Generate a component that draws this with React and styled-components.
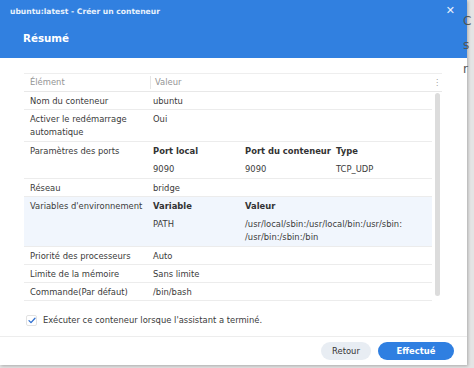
import React from "react";
import styled, { createGlobalStyle } from "styled-components";

const GlobalStyle = createGlobalStyle`
  html, body {
    margin: 0;
    padding: 0;
    background: #e4e4e4;
    font-family: "DejaVu Sans", Verdana, sans-serif;
  }
`;

const Page = styled.div`
  display: flex;
  width: 474px;
  height: 368px;
  overflow: hidden;
`;

const Dialog = styled.div`
  width: 467px;
  height: 365px;
  flex: none;
  background: #fff;
  display: flex;
  flex-direction: column;
  box-shadow: 1px 1px 3px rgba(0, 0, 0, 0.25);
`;

const Behind = styled.div`
  flex: 1;
  overflow: hidden;
  display: flex;
  flex-direction: column;
  padding-top: 14px;
  gap: 10px;
  color: #555;
  font-size: 12px;
  line-height: 14px;
  white-space: nowrap;
  margin-left: -4px;
`;

const Header = styled.div`
  height: 58px;
  background: #3180e0;
  color: #fff;
  padding: 5px 12px 0 10px;
  box-sizing: border-box;
`;

const TitleRow = styled.div`
  display: flex;
  justify-content: space-between;
  align-items: center;
  height: 12px;
  font-size: 7.6px;
  font-weight: bold;
  color: #e8f1fc;
`;

const Close = styled.span`
  font-size: 11px;
  font-weight: bold;
  line-height: 12px;
`;

const Heading = styled.div`
  margin: 14px 0 0 13px;
  font-size: 10.3px;
  font-weight: bold;
  line-height: 14px;
`;

const Body = styled.div`
  flex: 1;
  padding: 15px 25px 0 24px;
  display: flex;
  flex-direction: column;
  color: #3a3a3a;
  font-size: 8.4px;
`;

const Table = styled.div`
  display: flex;
  flex-direction: column;
`;

const HeadRow = styled.div`
  display: grid;
  grid-template-columns: 126px 1fr 10px;
  height: 19px;
  border-top: 1px solid #eeeeee;
  border-bottom: 1px solid #e8e8e8;
  box-sizing: border-box;
  color: #949494;
  align-items: center;
`;

const HeadCell = styled.div`
  padding-left: ${(p) => (p.first ? "6px" : "4px")};
  border-left: ${(p) => (p.first ? "none" : "1px solid #e6e6e6")};
  line-height: 13px;
`;

const Kebab = styled.div`
  color: #999;
  font-size: 8px;
  text-align: center;
  line-height: 8px;
`;

const Scroll = styled.div`
  display: grid;
  grid-template-columns: 1fr 10px;
`;

const Rows = styled.div`
  display: flex;
  flex-direction: column;
`;

const Row = styled.div`
  display: grid;
  grid-template-columns: 126px 1fr;
  min-height: ${(p) => p.h}px;
  box-sizing: border-box;
  border-bottom: 1px solid #ececec;
  background: ${(p) => (p.hl ? "#f1f6fd" : "#fff")};
  line-height: 13px;
`;

const Label = styled.div`
  padding: 3px 6px 1px;
`;

const Value = styled.div`
  padding: 3px 3px 1px;
`;

const Sub = styled.div`
  display: grid;
  grid-template-columns: ${(p) => p.cols};
  line-height: 13px;
`;

const SubCell = styled.div`
  padding: 3px 3px 2px;
  font-weight: ${(p) => (p.bold ? "bold" : "normal")};
  color: ${(p) => (p.bold ? "#333" : "#3a3a3a")};
  white-space: nowrap;
`;

const Track = styled.div`
  display: flex;
  justify-content: center;
  padding-top: 1px;
`;

const Thumb = styled.div`
  width: 5px;
  height: 203px;
  border-radius: 3px;
  background: #dcdcdc;
`;

const CheckLine = styled.label`
  display: flex;
  align-items: center;
  gap: 6px;
  margin: 13px 0 0 2px;
  line-height: 12px;
`;

const Box = styled.span`
  width: 9px;
  height: 9px;
  border: 1px solid #e2e2e2;
  border-radius: 2px;
  display: flex;
  align-items: center;
  justify-content: center;
  background: #fff;
`;

const Footer = styled.div`
  height: 29px;
  border-top: 1px solid #ededed;
  display: flex;
  justify-content: flex-end;
  align-items: flex-start;
  gap: 7px;
  padding: 5px 13px 0 0;
  box-sizing: border-box;
`;

const Button = styled.button`
  height: 18px;
  width: ${(p) => p.w}px;
  border: none;
  border-radius: 9px;
  font-family: "DejaVu Sans", Verdana, sans-serif;
  font-size: 8.4px;
  font-weight: ${(p) => (p.primary ? "bold" : "normal")};
  background: ${(p) => (p.primary ? "#2f7fe1" : "#e8edf3")};
  color: ${(p) => (p.primary ? "#fff" : "#333")};
  padding: 0;
`;

export default function App() {
  return (
    <>
      <GlobalStyle />
      <Page>
        <Dialog>
          <Header>
            <TitleRow>
              <span>ubuntu:latest - Créer un conteneur</span>
              <Close>✕</Close>
            </TitleRow>
            <Heading>Résumé</Heading>
          </Header>
          <Body>
            <Table>
              <HeadRow>
                <HeadCell first>Élément</HeadCell>
                <HeadCell>Valeur</HeadCell>
                <Kebab>⋮</Kebab>
              </HeadRow>
              <Scroll>
                <Rows>
                  <Row h={18}>
                    <Label>Nom du conteneur</Label>
                    <Value>ubuntu</Value>
                  </Row>
                  <Row h={32}>
                    <Label>
                      Activer le redémarrage
                      <br />
                      automatique
                    </Label>
                    <Value>Oui</Value>
                  </Row>
                  <Row h={36}>
                    <Label>Paramètres des ports</Label>
                    <Sub cols="92px 91px 1fr">
                      <SubCell bold>Port local</SubCell>
                      <SubCell bold>Port du conteneur</SubCell>
                      <SubCell bold>Type</SubCell>
                      <SubCell>9090</SubCell>
                      <SubCell>9090</SubCell>
                      <SubCell>TCP_UDP</SubCell>
                    </Sub>
                  </Row>
                  <Row h={18}>
                    <Label>Réseau</Label>
                    <Value>bridge</Value>
                  </Row>
                  <Row h={50} hl>
                    <Label>Variables d'environnement</Label>
                    <Sub cols="92px 1fr">
                      <SubCell bold>Variable</SubCell>
                      <SubCell bold>Valeur</SubCell>
                      <SubCell>PATH</SubCell>
                      <SubCell>
                        /usr/local/sbin:/usr/local/bin:/usr/sbin:
                        <br />
                        /usr/bin:/sbin:/bin
                      </SubCell>
                    </Sub>
                  </Row>
                  <Row h={18}>
                    <Label>Priorité des processeurs</Label>
                    <Value>Auto</Value>
                  </Row>
                  <Row h={18}>
                    <Label>Limite de la mémoire</Label>
                    <Value>Sans limite</Value>
                  </Row>
                  <Row h={18}>
                    <Label>Commande(Par défaut)</Label>
                    <Value>/bin/bash</Value>
                  </Row>
                </Rows>
                <Track>
                  <Thumb />
                </Track>
              </Scroll>
            </Table>
            <CheckLine>
              <Box>
                <svg width="8" height="7" viewBox="0 0 8 7">
                  <path d="M1 3.6 L3 5.6 L7 1.2" fill="none" stroke="#2f6fd0" strokeWidth="1.3" strokeLinecap="round" strokeLinejoin="round" />
                </svg>
              </Box>
              Exécuter ce conteneur lorsque l'assistant a terminé.
            </CheckLine>
          </Body>
          <Footer>
            <Button w={50}>Retour</Button>
            <Button w={76} primary>Effectué</Button>
          </Footer>
        </Dialog>
        <Behind>
          <span>C</span>
          <span>s</span>
          <span>r</span>
        </Behind>
      </Page>
    </>
  );
}
